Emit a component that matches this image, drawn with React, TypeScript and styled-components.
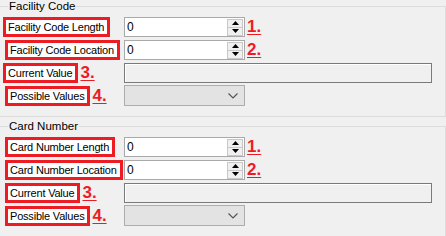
import React from 'react';
import styled, { createGlobalStyle } from 'styled-components';

const GlobalStyle = createGlobalStyle`
  html, body {
    margin: 0;
    padding: 0;
    background: #f0f0f0;
  }
  body {
    font-family: "Liberation Sans", Arial, sans-serif;
    font-size: 11px;
    color: #000;
  }
`;

interface Row {
  label: string;
  kind: 'spin' | 'text' | 'combo';
  mark: string;
  indent: number;
}

const GROUPS: { title: string; rows: Row[] }[] = [
  {
    title: 'Facility Code',
    rows: [
      { label: 'Facility Code Length', kind: 'spin', mark: '1.', indent: 3 },
      { label: 'Facility Code Location', kind: 'spin', mark: '2.', indent: 5 },
      { label: 'Current Value', kind: 'text', mark: '3.', indent: 3 },
      { label: 'Possible Values', kind: 'combo', mark: '4.', indent: 5 },
    ],
  },
  {
    title: 'Card Number',
    rows: [
      { label: 'Card Number Length', kind: 'spin', mark: '1.', indent: 5 },
      { label: 'Card Number Location', kind: 'spin', mark: '2.', indent: 5 },
      { label: 'Current Value', kind: 'text', mark: '3.', indent: 5 },
      { label: 'Possible Values', kind: 'combo', mark: '4.', indent: 5 },
    ],
  },
];

const SpinBox = () => (
  <SpinWrap>
    <SpinInput defaultValue="0" />
    <SpinButtons>
      <SpinButton>
        <svg width="7" height="4" viewBox="0 0 7 4">
          <path d="M3.5 0 L7 4 L0 4 Z" fill="#000" />
        </svg>
      </SpinButton>
      <SpinButton>
        <svg width="7" height="4" viewBox="0 0 7 4">
          <path d="M0 0 L7 0 L3.5 4 Z" fill="#000" />
        </svg>
      </SpinButton>
    </SpinButtons>
  </SpinWrap>
);

const ComboBox = () => (
  <Combo>
    <svg width="10" height="6" viewBox="0 0 10 6">
      <path d="M0.5 0.5 L5 5 L9.5 0.5" fill="none" stroke="#555" strokeWidth="1.2" />
    </svg>
  </Combo>
);

const App = () => {
  return (
    <Page>
      <GlobalStyle />
      {GROUPS.map((group) => (
        <Group key={group.title}>
          <Legend>{group.title}</Legend>
          <Rows>
            {group.rows.map((row) => (
              <FieldRow key={row.label}>
                <LabelCell $indent={row.indent}>
                  <LabelBox>{row.label}</LabelBox>
                  {row.kind !== 'spin' && <Mark>{row.mark}</Mark>}
                </LabelCell>
                <ControlCell>
                  {row.kind === 'spin' && (
                    <>
                      <SpinBox />
                      <Mark>{row.mark}</Mark>
                    </>
                  )}
                  {row.kind === 'text' && <ReadOnlyText />}
                  {row.kind === 'combo' && <ComboBox />}
                </ControlCell>
              </FieldRow>
            ))}
          </Rows>
        </Group>
      ))}
    </Page>
  );
};

export default App;

const Page = styled.div`
  width: 446px;
  height: 236px;
  display: flex;
  flex-direction: column;
  gap: 3px;
  box-sizing: border-box;
  overflow: hidden;
`;

const Group = styled.fieldset`
  margin: 0;
  padding: 0 0 9px 0;
  width: 446px;
  box-sizing: border-box;
  border: 1px solid #dcdcdc;
  border-left: none;
  border-radius: 0;
  min-inline-size: 0;
`;

const Legend = styled.legend`
  margin-left: 8px;
  padding: 0 1px;
  font-size: 11.5px;
  line-height: 13px;
`;

const Rows = styled.div`
  display: flex;
  flex-direction: column;
  padding-top: 2px;
`;

const FieldRow = styled.div`
  display: grid;
  grid-template-columns: 124px 1fr;
  height: 23px;
  align-items: center;
`;

const LabelCell = styled.div<{ $indent: number }>`
  display: flex;
  align-items: center;
  padding-left: ${({ $indent }) => $indent}px;
`;

const LabelBox = styled.span`
  display: inline-block;
  border: 3px solid #ed1c24;
  background: #ffffff;
  padding: 0 3px 0 2px;
  height: 14px;
  line-height: 14px;
  font-size: 11px;
  letter-spacing: -0.2px;
  white-space: nowrap;
`;

const Mark = styled.span`
  margin-left: 2px;
  font-family: "Liberation Sans", Arial, sans-serif;
  font-weight: bold;
  font-size: 17px;
  line-height: 17px;
  color: #ed1c24;
  text-decoration: underline;
  text-decoration-thickness: 1px;
  text-underline-offset: 2px;
`;

const ControlCell = styled.div`
  display: flex;
  align-items: center;
`;

const SpinWrap = styled.div`
  width: 121px;
  height: 20px;
  box-sizing: border-box;
  border: 1px solid #a9a9a9;
  background: #fff;
  display: flex;
  align-items: stretch;
`;

const SpinInput = styled.input`
  flex: 1;
  min-width: 0;
  border: none;
  outline: none;
  padding: 0 0 0 2px;
  font-family: "Liberation Sans", Arial, sans-serif;
  font-size: 12px;
  background: transparent;
`;

const SpinButtons = styled.div`
  width: 16px;
  display: flex;
  flex-direction: column;
  padding: 1px 1px 1px 0;
`;

const SpinButton = styled.div`
  flex: 1;
  display: flex;
  align-items: center;
  justify-content: center;
  background: #f0f0f0;
  border: 1px solid #c8c8c8;
  margin-bottom: -1px;
`;

const ReadOnlyText = styled.div`
  width: 308px;
  height: 20px;
  box-sizing: border-box;
  border: 1px solid #7a7a7a;
  background: #f0f0f0;
  box-shadow: inset 1px 1px 0 #fff;
`;

const Combo = styled.div`
  width: 121px;
  height: 21px;
  box-sizing: border-box;
  border: 1px solid #adadad;
  background: #e3e3e3;
  display: flex;
  align-items: center;
  justify-content: flex-end;
  padding-right: 6px;
`;
